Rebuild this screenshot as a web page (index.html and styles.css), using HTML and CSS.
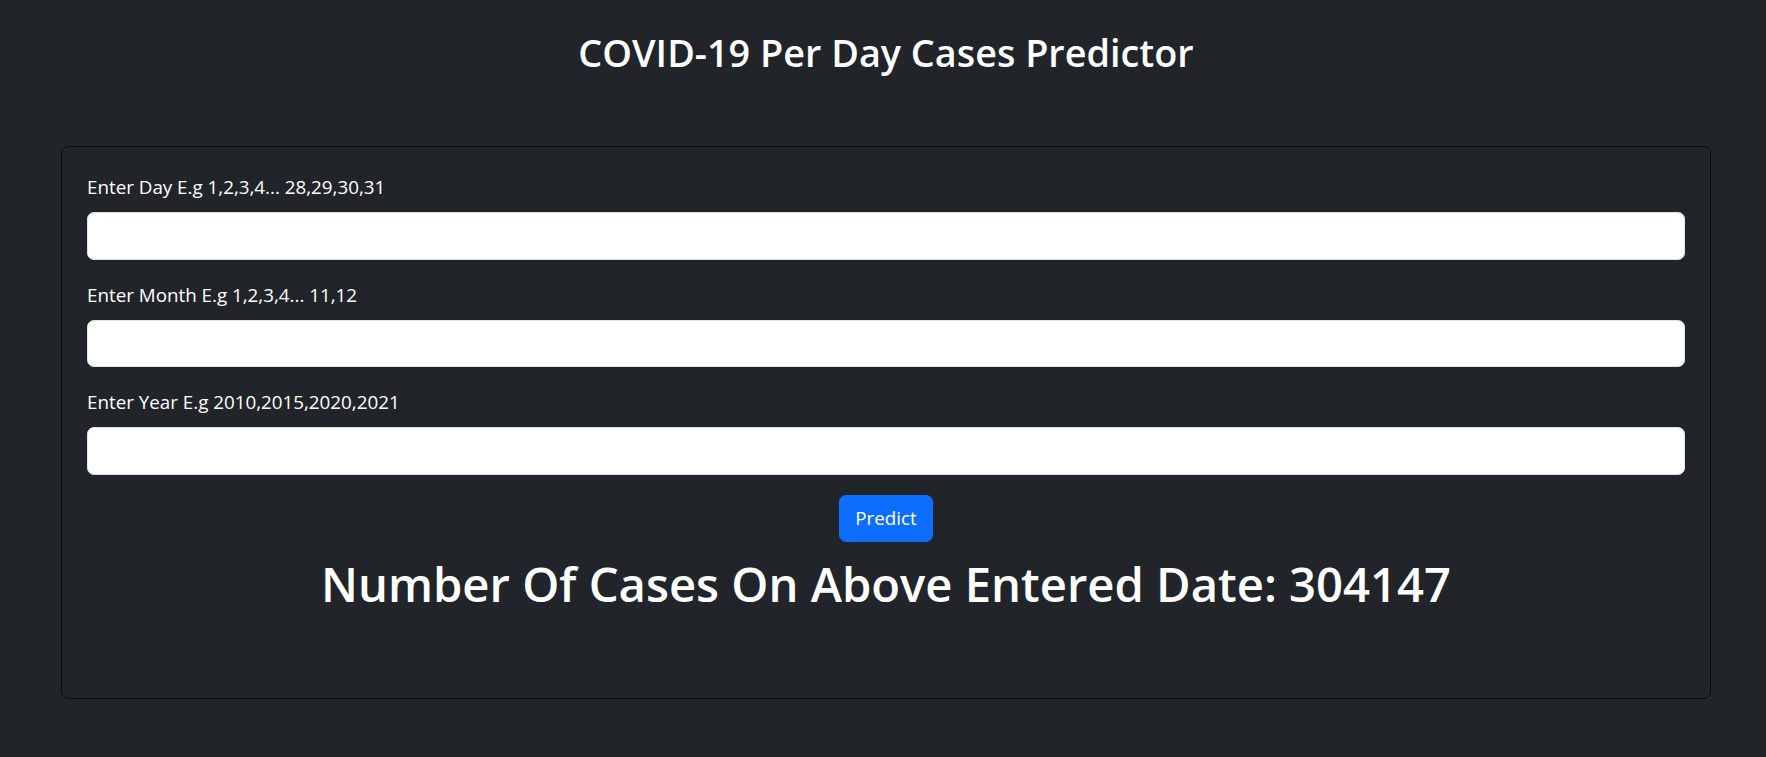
FILE: index.html
```html
<!DOCTYPE html>
<html>
<head>
    <meta charset="UTF-8">
    <meta name="viewport" content="width=device-width, initial-scale=1.0">
    <title>COVID-19 Per Day Cases Predictor</title>
    <link rel="stylesheet" href="styles.css">
</head>
<body>
    <div class="page">
        <h2 class="title">COVID-19 Per Day Cases Predictor</h2>

        <div class="card">
            <form id="predictForm" onsubmit="return false">
                <div class="form-group">
                    <label for="day">Enter Day E.g 1,2,3,4... 28,29,30,31</label>
                    <input type="text" id="day" name="day">
                </div>

                <div class="form-group">
                    <label for="month">Enter Month E.g 1,2,3,4... 11,12</label>
                    <input type="text" id="month" name="month">
                </div>

                <div class="form-group">
                    <label for="year">Enter Year E.g 2010,2015,2020,2021</label>
                    <input type="text" id="year" name="year">
                </div>

                <div class="actions">
                    <button type="submit">Predict</button>
                </div>
            </form>

            <h1 class="result">Number Of Cases On Above Entered Date: 304147</h1>
        </div>
    </div>
</body>
</html>
```

FILE: styles.css
```css
body {
    font-family: "Segoe UI", "Open Sans", "Noto Sans", Arial, sans-serif;
    font-size: 18.8px;
    line-height: 30px;
    color: #fff;
    margin: 0;
    padding: 0;
    background-color: #212529;
}
.page {
    padding: 0 55px 0 61px;
}
.title {
    margin: 0;
    padding-top: 29px;
    font-size: 37.8px;
    font-weight: 600;
    line-height: 48px;
    text-align: center;
}
.card {
    margin-top: 69px;
    padding: 25px 25px 84px;
    border: 1px solid #0b0c0d;
    border-radius: 7px;
    background-color: #212529;
}
.form-group {
    margin-bottom: 20px;
}
label {
    display: block;
    margin-bottom: 10px;
}
input {
    display: block;
    width: 100%;
    height: 47.5px;
    padding: 7.5px 15px;
    font: inherit;
    color: #212529;
    background-color: #fff;
    border: 1px solid #dee2e6;
    border-radius: 7px;
    box-sizing: border-box;
}
.actions {
    text-align: center;
}
button {
    padding: 7.5px 15px;
    font: inherit;
    color: #fff;
    background-color: #0d6efd;
    border: 1px solid #0d6efd;
    border-radius: 7px;
    cursor: pointer;
}
.result {
    margin: 12px 0 0;
    font-size: 47.2px;
    font-weight: 600;
    line-height: 60px;
    text-align: center;
}
```
